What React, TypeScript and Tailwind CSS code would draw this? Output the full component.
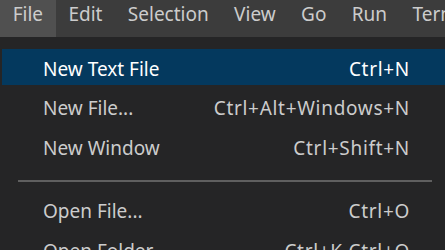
import React from "react";

const font = { fontFamily: '"Noto Sans", "Open Sans", sans-serif' };

function Row({ label, shortcut, active }: { label: string; shortcut: string; active?: boolean }) {
  return (
    <div
      className={
        "flex h-[36px] w-[460px] shrink-0 items-center pl-[41px] pr-[52px] pt-[4px] text-[19px] " +
        (active ? "bg-[#04395e] text-white" : "text-[#cccccc]")
      }
    >
      <span className="flex-1 whitespace-nowrap">{label}</span>
      <span className="whitespace-nowrap tracking-[0.7px]">{shortcut}</span>
    </div>
  );
}

export default function App() {
  const items = ["File", "Edit", "Selection", "View", "Go", "Run", "Terminal", "Help"];
  return (
    <div className="h-[250px] w-[445px] overflow-hidden bg-[#252526]" style={font}>
      <div className="flex h-[37px] items-stretch bg-[#3c3c3c] text-[19px] text-[#cccccc]">
        {items.map((it, i) => (
          <div
            key={it}
            className={
              "flex items-center whitespace-nowrap px-[12.7px] pb-[8px] " + (i === 0 ? "bg-[#505050]" : "")
            }
          >
            {it}
          </div>
        ))}
      </div>
      <div className="flex flex-col gap-[3.4px] pl-[2px] pt-[12px]">
        <Row label="New Text File" shortcut="Ctrl+N" active />
        <Row label="New File..." shortcut="Ctrl+Alt+Windows+N" />
        <Row label="New Window" shortcut="Ctrl+Shift+N" />
        <div className="flex h-[21px] shrink-0 items-start pl-[16px] pt-[13px]">
          <div className="h-[2px] w-[414px] bg-[#5f5f5f]" />
        </div>
        <Row label="Open File..." shortcut="Ctrl+O" />
        <Row label="Open Folder..." shortcut="Ctrl+K Ctrl+O" />
      </div>
    </div>
  );
}
